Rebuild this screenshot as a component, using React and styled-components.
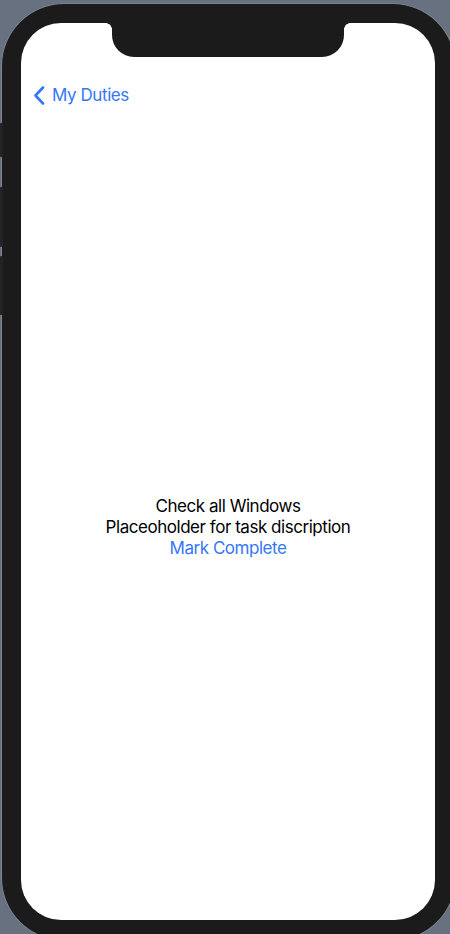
import React from "react";
import styled, { createGlobalStyle } from "styled-components";

const Global = createGlobalStyle`
  html, body {
    margin: 0;
    padding: 0;
    background: #687180;
    overflow: hidden;
    font-family: Inter, "Noto Sans", "Liberation Sans", sans-serif;
  }
`;

const Stage = styled.div`
  width: 450px;
  height: 934px;
  padding: 4px 0 0 2px;
  box-sizing: border-box;
  overflow: hidden;
`;

const Frame = styled.div`
  position: relative;
  width: 453px;
  height: 936px;
  box-sizing: border-box;
  padding: 19px 19px 19px 19px;
  background: #1b1b1b;
  border-radius: 62px;
  box-shadow: 0 0 0 0.6px #8a93a0;
`;

const SideButton = styled.div`
  position: absolute;
  left: -2px;
  width: 3px;
  top: ${(p) => p.$top}px;
  height: ${(p) => p.$h}px;
  background: #232323;
  border-radius: 1px 0 0 1px;
`;

const Screen = styled.div`
  position: relative;
  height: 897px;
  width: 414px;
  background: #ffffff;
  border-radius: 40px;
  display: flex;
  flex-direction: column;
  overflow: hidden;
`;

const Notch = styled.div`
  position: absolute;
  top: 0;
  left: 91px;
  width: 232px;
  height: 34px;
  background: #1b1b1b;
  border-radius: 0 0 22px 22px;

  &::before,
  &::after {
    content: "";
    position: absolute;
    top: 0;
    width: 6px;
    height: 6px;
  }
  &::before {
    left: -6px;
    background: radial-gradient(circle at 0 100%, transparent 5.5px, #1b1b1b 6px);
  }
  &::after {
    right: -6px;
    background: radial-gradient(circle at 100% 100%, transparent 5.5px, #1b1b1b 6px);
  }
`;

const NavBar = styled.div`
  display: flex;
  align-items: center;
  height: 44px;
  margin-top: 50px;
  padding-left: 12px;
`;

const BackButton = styled.button`
  display: flex;
  align-items: center;
  gap: 7px;
  background: none;
  border: none;
  padding: 0;
  color: #3478f6;
  font-family: inherit;
  font-size: 17px;
  letter-spacing: -0.42px;
  cursor: pointer;
`;

const Content = styled.div`
  flex: 1;
  display: flex;
  flex-direction: column;
  align-items: center;
  justify-content: flex-start;
  padding-top: 379px;
`;

const Line = styled.div`
  font-size: 17px;
  line-height: 21px;
  letter-spacing: -0.46px;
  color: ${(p) => (p.$link ? "#3478f6" : "#000000")};
  text-align: center;
`;

const Chevron = () => (
  <svg width="12" height="19" viewBox="0 0 12 19" fill="none">
    <path
      d="M10 1.5 L2.5 9.5 L10 17.5"
      stroke="#3478f6"
      strokeWidth="2.6"
      strokeLinecap="round"
      strokeLinejoin="round"
    />
  </svg>
);

export default function App() {
  return (
    <>
      <Global />
      <Stage>
        <Frame>
          <SideButton $top={119} $h={34} />
          <SideButton $top={183} $h={60} />
          <SideButton $top={252} $h={59} />
          <Screen>
            <Notch />
            <NavBar>
              <BackButton>
                <Chevron />
                My Duties
              </BackButton>
            </NavBar>
            <Content>
              <Line>Check all Windows</Line>
              <Line>Placeoholder for task discription</Line>
              <Line $link>Mark Complete</Line>
            </Content>
          </Screen>
        </Frame>
      </Stage>
    </>
  );
}
